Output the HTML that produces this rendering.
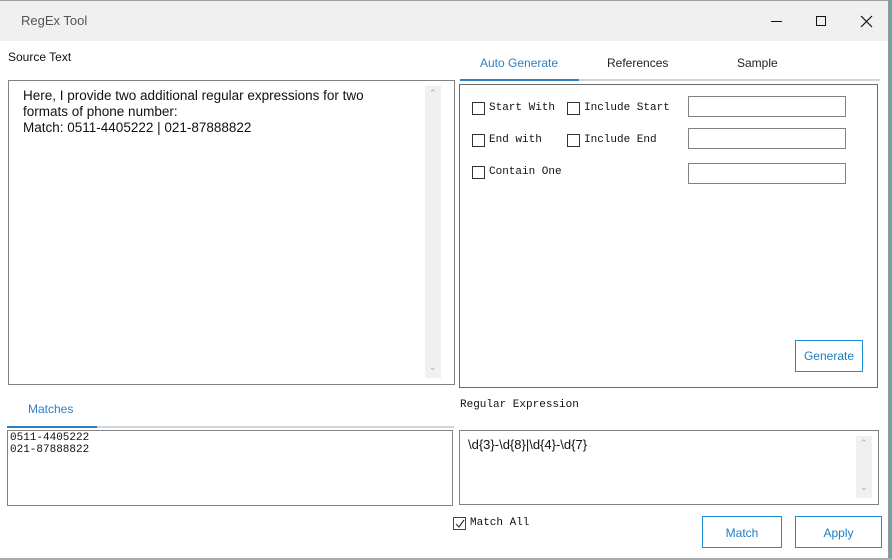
<!DOCTYPE html>
<html><head><style>
*{margin:0;padding:0;box-sizing:border-box}
body{width:892px;height:560px;overflow:hidden;background:#fff;font-family:"Liberation Sans",sans-serif;position:relative}
.a{position:absolute}
.box{position:absolute;border:1px solid #828282;background:#fff}
.mono{font-family:"Liberation Mono","Noto Sans CJK SC",monospace;font-size:11px;color:#111}
.cb{position:absolute;width:13px;height:13px;border:1px solid #333;background:#fff}
.btn{position:absolute;border:1px solid #1a8fd6;color:#1a7fc4;font-size:12px;text-align:center;background:#fff}
.sb{position:absolute;background:#f0f0f0}
</style></head><body>
<div class="a" style="left:0;top:0;width:892px;height:41px;background:#f0f0f0;border-top:1px solid #a0a0a0"></div>
<div class="a" style="left:21px;top:13px;font-size:13px;color:#555">RegEx Tool</div>
<div class="a" style="left:771px;top:21px;width:11px;height:1px;background:#111"></div>
<div class="a" style="left:816px;top:16px;width:10px;height:10px;border:1px solid #111"></div>
<svg class="a" style="left:860px;top:15px" width="13" height="13"><path d="M1 1L12 12M12 1L1 12" stroke="#111" stroke-width="1.2"/></svg>
<div class="a" style="left:888px;top:0;width:4px;height:560px;background:#6aa6a8;border-left:1px solid #999"></div>
<div class="a" style="left:0;top:558px;width:892px;height:2px;background:#aaa"></div>

<div class="a" style="left:8px;top:50px;font-size:12px;color:#111">Source Text</div>
<div class="box" style="left:8px;top:80px;width:447px;height:305px"></div>
<div class="a" style="left:23px;top:88px;font-size:13.5px;line-height:16px;color:#111;width:375px">Here, I provide two additional regular expressions for two formats of phone number:<br>Match: 0511-4405222 | 021-87888822</div>
<div class="sb" style="left:425px;top:86px;width:16px;height:292px"></div>
<div class="a" style="left:429px;top:88px;font-size:9px;color:#aaa">&#8963;</div>
<div class="a" style="left:429px;top:362px;font-size:9px;color:#aaa">&#8964;</div>

<div class="a" style="left:460px;top:79px;width:420px;height:2px;background:#cfd6de"></div>
<div class="a" style="left:460px;top:79px;width:119px;height:2px;background:#2e7fc7"></div>
<div class="a" style="left:480px;top:56px;font-size:12px;color:#2e7fc7">Auto Generate</div>
<div class="a" style="left:607px;top:56px;font-size:12px;color:#222">References</div>
<div class="a" style="left:737px;top:56px;font-size:12px;color:#222">Sample</div>
<div class="box" style="left:459px;top:84px;width:419px;height:304px;border-color:#6a6a6a"></div>
<div class="cb" style="left:472px;top:102px"></div><div class="a mono" style="left:489px;top:102px">Start With</div>
<div class="cb" style="left:567px;top:102px"></div><div class="a mono" style="left:584px;top:102px">Include Start</div>
<div class="cb" style="left:472px;top:134px"></div><div class="a mono" style="left:489px;top:134px">End with</div>
<div class="cb" style="left:567px;top:134px"></div><div class="a mono" style="left:584px;top:134px">Include End</div>
<div class="cb" style="left:472px;top:166px"></div><div class="a mono" style="left:489px;top:166px">Contain One</div>
<div class="box" style="left:688px;top:96px;width:158px;height:21px"></div>
<div class="box" style="left:688px;top:128px;width:158px;height:21px"></div>
<div class="box" style="left:688px;top:163px;width:158px;height:21px"></div>
<div class="btn" style="left:795px;top:340px;width:68px;height:32px;line-height:30px">Generate</div>

<div class="a" style="left:28px;top:402px;font-size:12px;color:#2e7fc7">Matches</div>
<div class="a" style="left:7px;top:426px;width:447px;height:2px;background:#cfd6de"></div>
<div class="a" style="left:7px;top:426px;width:90px;height:2px;background:#2e7fc7"></div>
<div class="box" style="left:7px;top:430px;width:446px;height:76px"></div>
<div class="a mono" style="left:10px;top:432px;line-height:12px;font-size:11px">0511-4405222<br>021-87888822</div>

<div class="a mono" style="left:460px;top:399px">Regular Expression</div>
<div class="box" style="left:459px;top:430px;width:420px;height:75px"></div>
<div class="a" style="left:468px;top:437px;font-size:13px;color:#111">\d{3}-\d{8}|\d{4}-\d{7}</div>
<div class="sb" style="left:856px;top:436px;width:16px;height:62px"></div>
<div class="a" style="left:860px;top:438px;font-size:9px;color:#aaa">&#8963;</div>
<div class="a" style="left:860px;top:482px;font-size:9px;color:#aaa">&#8964;</div>

<div class="cb" style="left:453px;top:517px;border-color:#444"></div>
<svg class="a" style="left:454px;top:518px" width="12" height="12"><path d="M2 6L5 9L10 2" stroke="#333" fill="none" stroke-width="1.2"/></svg>
<div class="a mono" style="left:470px;top:517px">Match All</div>
<div class="btn" style="left:702px;top:516px;width:80px;height:32px;line-height:32px">Match</div>
<div class="btn" style="left:795px;top:516px;width:87px;height:32px;line-height:32px">Apply</div>
</body></html>
